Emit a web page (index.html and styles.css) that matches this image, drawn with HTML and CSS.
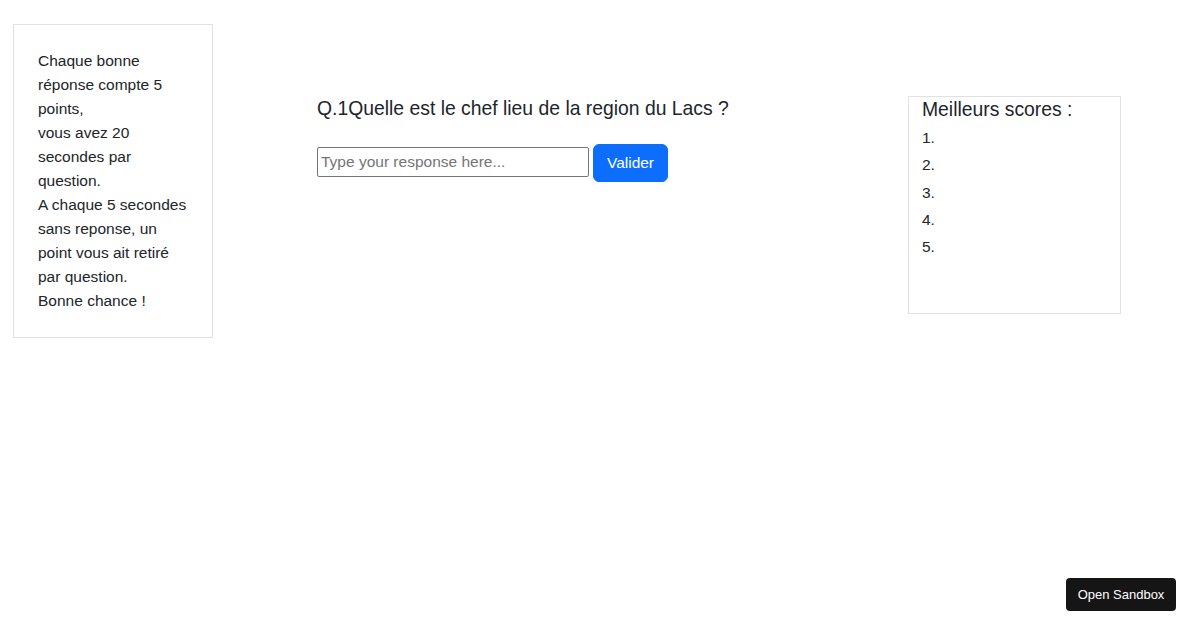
FILE: index.html
```html
<!DOCTYPE html>
<html lang="fr">
<head>
<meta charset="utf-8">
<title>Quiz</title>
<link rel="stylesheet" href="styles.css">
</head>
<body>
<div class="page">
  <aside class="rules">
    Chaque bonne réponse compte 5 points,<br>
    vous avez 20 secondes par question.<br>
    A chaque 5 secondes sans reponse, un point vous ait retiré par question.<br>
    Bonne chance !
  </aside>
  <main class="quiz">
    <h5 class="question">Q.1Quelle est le chef lieu de la region du Lacs ?</h5>
    <div class="answer-row">
      <input class="answer" type="text" placeholder="Type your response here...">
      <button class="btn-primary" type="button">Valider</button>
    </div>
  </main>
  <aside class="scores">
    <h5 class="scores-title">Meilleurs scores :</h5>
    <ol class="score-list">
      <li>1.</li>
      <li>2.</li>
      <li>3.</li>
      <li>4.</li>
      <li>5.</li>
    </ol>
  </aside>
</div>
<button class="sandbox-btn" type="button">Open Sandbox</button>
</body>
</html>
```
FILE: styles.css
```css
* { box-sizing: border-box; }
html, body {
  margin: 0;
  padding: 0;
  background: #fff;
}
body {
  font-family: "Liberation Sans", Arial, sans-serif;
  font-size: 15.5px;
  line-height: 24px;
  color: #212529;
  width: 1200px;
  height: 630px;
  overflow: hidden;
}
.page {
  display: flex;
  align-items: flex-start;
  padding: 24px 0 0 13px;
}
.rules {
  width: 200px;
  border: 1px solid #dee2e6;
  padding: 24px 24px 24px 24px;
  line-height: 24px;
}
.quiz {
  width: 591px;
  margin-left: 104px;
  margin-top: 72px;
}
.question {
  margin: 0 0 24px 0;
  font-size: 19.35px;
  font-weight: 400;
  line-height: 24px;
}
.answer-row {
  display: flex;
  align-items: center;
}
.answer {
  width: 272px;
  height: 30px;
  margin-bottom: 2px;
  padding: 1px 3px;
  border: 1px solid #767676;
  border-radius: 2px;
  font-family: "Liberation Sans", Arial, sans-serif;
  font-size: 15.5px;
  color: #212529;
}
.answer::placeholder { color: #757575; }
.btn-primary {
  margin-left: 4px;
  min-width: 75px;
  height: 38px;
  padding: 6px 12px;
  border: 1px solid #0d6efd;
  border-radius: 6px;
  background: #0d6efd;
  color: #fff;
  font-family: "Liberation Sans", Arial, sans-serif;
  font-size: 15.5px;
  line-height: 24px;
}
.scores {
  width: 213px;
  height: 218px;
  margin-top: 72px;
  border: 1px solid #dee2e6;
  padding: 0 13px;
}
.scores-title {
  margin: 0;
  font-size: 19.35px;
  font-weight: 400;
  line-height: 24px;
}
.score-list {
  list-style: none;
  margin: 3px 0 0 0;
  padding: 0;
}
.score-list li {
  height: 27.25px;
  line-height: 27.25px;
}
.sandbox-btn {
  position: fixed;
  right: 24px;
  bottom: 19px;
  width: 110px;
  height: 33px;
  border: none;
  border-radius: 4px;
  background: #151515;
  color: #fff;
  font-family: "Liberation Sans", Arial, sans-serif;
  font-size: 13px;
  padding: 0;
}
```
